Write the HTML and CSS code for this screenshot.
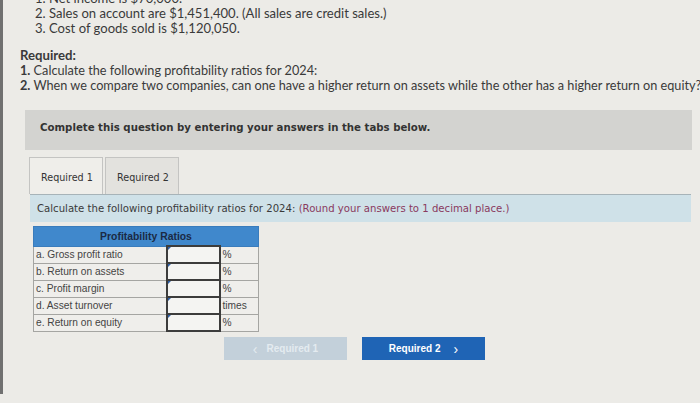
FILE: index.html
```html
<!DOCTYPE html>
<html>
<head>
<meta charset="utf-8">
<link rel="stylesheet" href="styles.css">
</head>
<body>
<div class="screen">
  <div class="intro">
    <p class="given">1. Net income is $70,000.</p>
    <p class="given">2. Sales on account are $1,451,400. (All sales are credit sales.)</p>
    <p class="given">3. Cost of goods sold is $1,120,050.</p>
  </div>
  <div class="required">
    <p class="req-title">Required:</p>
    <p class="req-line"><b>1.</b> Calculate the following profitability ratios for 2024:</p>
    <p class="req-line"><b>2.</b> When we compare two companies, can one have a higher return on assets while the other has a higher return on equity?</p>
  </div>
  <div class="banner">Complete this question by entering your answers in the tabs below.</div>
  <div class="tabs">
    <div class="tab active">Required 1</div>
    <div class="tab">Required 2</div>
  </div>
  <div class="instr">Calculate the following profitability ratios for 2024: <span class="round">(Round your answers to 1 decimal place.)</span></div>
  <table class="ratios">
    <tr><th colspan="3">Profitability Ratios</th></tr>
    <tr><td class="lbl">a. Gross profit ratio</td><td class="inp"><span class="flag"></span></td><td class="unit">%</td></tr>
    <tr><td class="lbl">b. Return on assets</td><td class="inp"><span class="flag"></span></td><td class="unit">%</td></tr>
    <tr><td class="lbl">c. Profit margin</td><td class="inp"><span class="flag"></span></td><td class="unit">%</td></tr>
    <tr><td class="lbl">d. Asset turnover</td><td class="inp"><span class="flag"></span></td><td class="unit">times</td></tr>
    <tr><td class="lbl">e. Return on equity</td><td class="inp"><span class="flag"></span></td><td class="unit">%</td></tr>
  </table>
  <div class="nav">
    <div class="btn disabled"><span class="chev left">&lsaquo;</span>Required 1</div>
    <div class="btn primary">Required 2<span class="chev right">&rsaquo;</span></div>
  </div>
</div>
</body>
</html>
```
FILE: styles.css
```css
html, body {
  margin: 0;
  padding: 0;
  height: 100%;
}
body {
  background: #ecebe7;
  overflow: hidden;
}
.screen {
  border-left: 3px solid #707070;
  height: 403px;
  box-sizing: border-box;
}
p { margin: 0; }
.intro {
  margin-top: -9px;
  padding-left: 32px;
  font-family: Lato, "Open Sans", sans-serif;
  font-size: 13.05px;
  line-height: 15px;
  color: #3a3a3a;
}
.required {
  margin-top: 12px;
  padding-left: 17px;
  font-family: Lato, "Open Sans", sans-serif;
  font-size: 12.7px;
  line-height: 14.8px;
  color: #3a3a3a;
  white-space: nowrap;
}
.req-title { font-weight: bold; font-size: 13.2px; }
.req-line b { font-weight: bold; }
.banner {
  margin: 18px 8px 0 22px;
  height: 40px;
  background: #d3d3d0;
  box-sizing: border-box;
  padding: 12px 0 0 15px;
  font-family: "DejaVu Sans", Verdana, sans-serif;
  font-weight: bold;
  font-size: 10.2px;
  color: #333;
}
.tabs {
  display: flex;
  gap: 2px;
  margin: 7px 0 0 26px;
  height: 37px;
}
.tab {
  width: 74px;
  box-sizing: border-box;
  border: 1px solid #c4c4c2;
  border-bottom: none;
  background: #e3e2de;
  font-family: "DejaVu Sans", Verdana, sans-serif;
  font-size: 9.6px;
  color: #333;
  padding: 14px 0 0 11px;
}
.tab.active {
  background: #efeeea;
}
.instr {
  margin: 0 9px 0 27px;
  height: 28px;
  box-sizing: border-box;
  background: #cfe1e8;
  border-top: 1px solid #a7b3b8;
  padding: 8px 0 0 7px;
  font-family: "DejaVu Sans", Verdana, sans-serif;
  font-size: 10.15px;
  color: #3a3a3a;
  white-space: nowrap;
}
.round { color: #8a3a5e; }
.ratios {
  margin: 4px 0 0 30px;
  border-collapse: collapse;
  font-family: "Liberation Sans", Arial, sans-serif;
  font-size: 10.2px;
  color: #444;
}
.ratios th {
  background: #4088cc;
  color: #1b2a44;
  font-weight: bold;
  height: 18px;
  padding: 0;
  border: 1px solid #3a7cbc;
  font-size: 10.4px;
}
.ratios td {
  height: 17px;
  box-sizing: border-box;
  padding: 0 3px;
  border: 1px solid #a5a5a2;
  background: #efeeeb;
}
.ratios td.lbl { width: 133px; padding-left: 2px; }
.ratios td.inp {
  width: 53px;
  border: 2px solid #3c3c3c;
  background: #f4f4f2;
  position: relative;
  padding: 0;
}
.flag {
  position: absolute;
  left: 0;
  top: 0;
  width: 0;
  height: 0;
  border-top: 3px solid #2f5fa6;
  border-right: 3px solid transparent;
}
.ratios td.unit { width: 39px; padding-left: 2px; }
.nav {
  display: flex;
  gap: 15px;
  margin: 5px 0 0 221px;
}
.btn {
  width: 123px;
  height: 23px;
  box-sizing: border-box;
  display: flex;
  align-items: center;
  justify-content: center;
  font-family: "Liberation Sans", Arial, sans-serif;
  font-weight: bold;
  font-size: 10px;
}
.btn.disabled {
  background: #c3d0da;
  color: #e4ebf0;
}
.btn.primary {
  background: #1f64b5;
  color: #ffffff;
}
.chev {
  font-size: 14px;
  line-height: 1;
  font-weight: normal;
}
.chev.left { margin-right: 9px; }
.chev.right { margin-left: 13px; }
```
